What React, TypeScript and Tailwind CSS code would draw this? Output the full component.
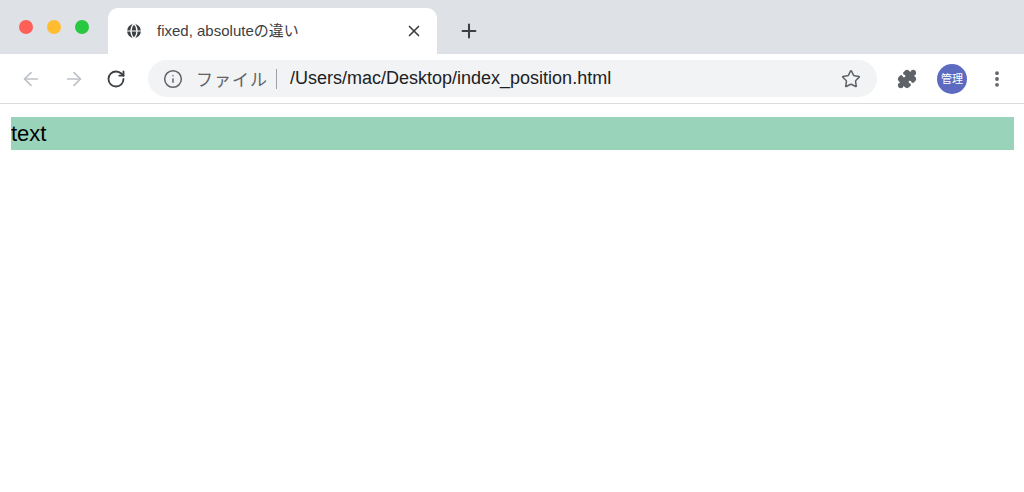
import React from "react";
import { Globe, X, Plus, ArrowLeft, ArrowRight, RotateCw, Info, Star, Puzzle, MoreVertical } from "lucide-react";

export default function App() {
  return (
    <div className="w-[1024px] h-[492px] bg-white overflow-hidden" style={{ fontFamily: '"Noto Sans CJK JP", "Liberation Sans", sans-serif' }}>
      <div className="h-[54px] bg-[#dee1e6] flex items-end">
        <div className="w-[108px] h-[54px] flex items-center pl-[19px] gap-[14px] pb-[1px]">
          <span className="w-[14px] h-[14px] rounded-full bg-[#fe5f57]" />
          <span className="w-[14px] h-[14px] rounded-full bg-[#febc2e]" />
          <span className="w-[14px] h-[14px] rounded-full bg-[#28c840]" />
        </div>
        <div className="w-[329px] h-[46px] bg-white rounded-t-[10px] flex items-center pl-[17px] pr-[14px]">
          <Globe size={18} className="text-[#3c4043]" fill="#3c4043" stroke="white" strokeWidth={1.6} />
          <span className="ml-[14px] text-[15px] text-[#3c4043] flex-1" style={{ fontFamily: '"Liberation Sans", "Noto Sans CJK JP", sans-serif' }}>fixed, absoluteの違い</span>
          <X size={18} className="text-[#3c4043]" strokeWidth={2.2} />
        </div>
        <div className="h-[46px] flex items-center ml-[21px]">
          <Plus size={22} className="text-[#3c4043]" strokeWidth={2.2} />
        </div>
      </div>
      <div className="h-[50px] bg-white flex items-center border-b border-[#dadce0]">
        <div className="w-[148px] flex items-center pl-[20px] gap-[21px]">
          <ArrowLeft size={22} className="text-[#bdc1c6]" strokeWidth={1.8} />
          <ArrowRight size={22} className="text-[#bdc1c6]" strokeWidth={1.8} />
          <RotateCw size={20} className="text-[#3c4043]" strokeWidth={2.2} />
        </div>
        <div className="w-[729px] h-[37px] rounded-full bg-[#f1f3f4] flex items-center pl-[15px] pr-[16px]">
          <Info size={20} className="text-[#5f6368]" strokeWidth={1.8} />
          <span className="ml-[13px] text-[17px] text-[#5f6368] tracking-[1px]">ファイル</span>
          <span className="ml-[8px] w-px h-[20px] bg-[#9aa0a6]" />
          <span className="ml-[13px] text-[18px] text-[#202124] flex-1" style={{ fontFamily: '"Liberation Sans", sans-serif' }}>/Users/mac/Desktop/index_position.html</span>
          <Star size={20} className="text-[#5f6368]" strokeWidth={1.8} />
        </div>
        <div className="flex items-center ml-[20px] gap-[20px]">
          <Puzzle size={20} className="text-[#5f6368]" fill="#5f6368" />
          <span className="w-[30px] h-[30px] rounded-full bg-[#5c6bc0] text-white text-[11px] flex items-center justify-center">管理</span>
          <MoreVertical size={20} className="text-[#5f6368]" strokeWidth={2.6} />
        </div>
      </div>
      <div className="pt-[13px] px-[11px] pr-[10px]">
        <div className="h-[33px] bg-[#99d3b9] text-[22px] leading-[33px] text-black" style={{ fontFamily: '"Liberation Sans", sans-serif' }}>text</div>
      </div>
    </div>
  );
}
